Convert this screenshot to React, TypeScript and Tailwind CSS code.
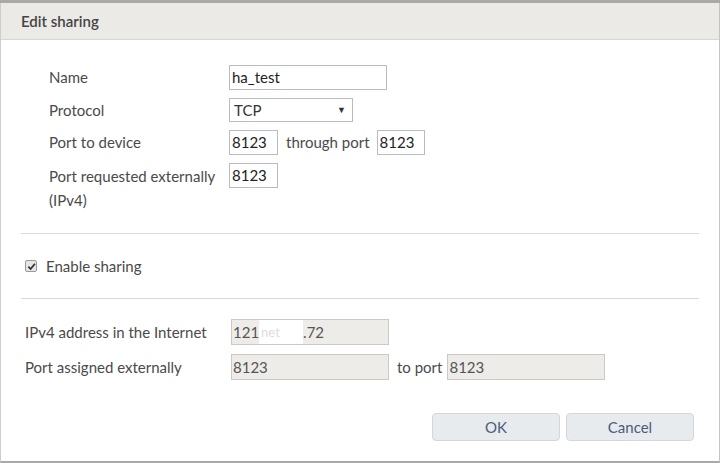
import React from "react";

const inputBase =
  "h-[25px] border border-[#b9bdbf] bg-white px-[2px] text-[15px] leading-[23px] text-[#222] outline-none";
const roBase =
  "h-[26px] border border-[#c9c9c6] bg-[#edece8] px-[1px] text-[15px] leading-[24px] text-[#555]";

export default function App() {
  return (
    <div
      className="w-[720px] h-[463px] flex flex-col bg-white text-[#4a4a4a]"
      style={{ fontFamily: "Lato, 'Noto Sans', sans-serif" }}
    >
      <div className="h-[3px] bg-[#a9a9a9]" />
      <div className="flex-1 flex flex-col border-l border-r border-b-2 border-l-[#cdcdcd] border-r-[#c4c4c4] border-b-[#a9a9a9]">
        <div className="h-[37px] bg-[#ebeae6] border-b border-[#d6d6d4] flex items-center pl-[20px] text-[15px] font-semibold text-[#444]">
          Edit sharing
        </div>

        <div className="flex flex-col px-[20px]">
          {/* first section */}
          <div className="flex flex-col pl-[28px] pt-[25px] pb-[21px] gap-[8px] border-b border-[#d9d9d9] text-[15px]">
            <div className="flex items-center">
              <div className="w-[180px]">Name</div>
              <div className={inputBase + " w-[158px]"}>ha_test</div>
            </div>
            <div className="flex items-center">
              <div className="w-[180px]">Protocol</div>
              <div className="w-[124px] h-[24px] border border-[#b9bdbf] bg-white flex items-center justify-between pl-[4px] pr-[6px] text-[#333]">
                <span>TCP</span>
                <span className="text-[9px] text-[#333]">▼</span>
              </div>
            </div>
            <div className="flex items-center">
              <div className="w-[180px]">Port to device</div>
              <div className={inputBase + " w-[49px]"}>8123</div>
              <div className="ml-[8px] mr-[7px]">through port</div>
              <div className={inputBase + " w-[48px]"}>8123</div>
            </div>
            <div className="flex items-start">
              <div className="w-[180px] leading-[24px] pt-[1px]">
                Port requested externally
                <br />
                (IPv4)
              </div>
              <div className={inputBase + " w-[49px]"}>8123</div>
            </div>
          </div>

          {/* enable sharing */}
          <div className="flex items-center h-[65px] border-b border-[#d9d9d9] pl-[4px] text-[15px]">
            <div className="w-[12px] h-[12px] rounded-[2px] border border-[#999] bg-[#e6e6e6] flex items-center justify-center mr-[9px]">
              <svg width="9" height="9" viewBox="0 0 10 10">
                <path d="M1.5 5.2 L4 7.8 L8.8 2" fill="none" stroke="#333" strokeWidth="2" />
              </svg>
            </div>
            <span>Enable sharing</span>
          </div>

          {/* third section */}
          <div className="flex flex-col pl-[4px] pt-[20px] gap-[9px] text-[15px]">
            <div className="flex items-center">
              <div className="w-[206px]">IPv4 address in the Internet</div>
              <div className={roBase + " w-[158px] flex items-center"}>
                <span>121</span>
                <span className="inline-block w-[44px] h-[24px] bg-white text-[#ddd] text-[13px] leading-[24px] pl-[2px]">
                  net
                </span>
                <span>.72</span>
              </div>
            </div>
            <div className="flex items-center">
              <div className="w-[206px]">Port assigned externally</div>
              <div className={roBase + " w-[158px]"}>8123</div>
              <div className="ml-[8px] mr-[5px]">to port</div>
              <div className={roBase + " w-[158px]"}>8123</div>
            </div>
          </div>

          <div className="flex justify-end gap-[6px] pt-[33px] pr-[5px]">
            <button className="w-[128px] h-[28px] rounded-[4px] border border-[#d3d7db] bg-[#e8ebee] text-[15px] text-[#4a5c7c]">
              OK
            </button>
            <button className="w-[128px] h-[28px] rounded-[4px] border border-[#d3d7db] bg-[#e8ebee] text-[15px] text-[#4a5c7c]">
              Cancel
            </button>
          </div>
        </div>
      </div>
    </div>
  );
}
